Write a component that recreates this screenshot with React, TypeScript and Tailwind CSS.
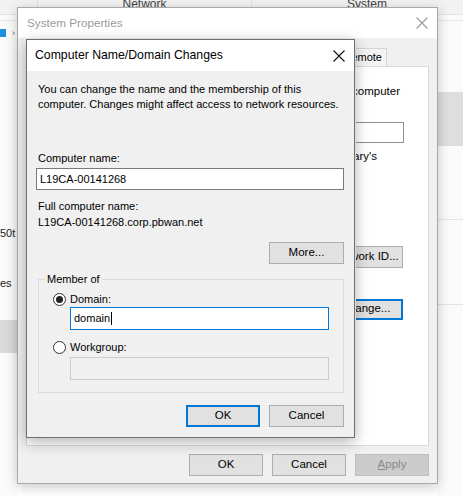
import React from "react";

const Btn = ({
  label,
  w = "w-[74px]",
  primary = false,
  disabled = false,
}: {
  label: React.ReactNode;
  w?: string;
  primary?: boolean;
  disabled?: boolean;
}) => (
  <div
    className={`${w} h-[22px] flex items-center justify-center text-[11.5px] ${
      disabled
        ? "bg-[#cccccc] border border-[#bfbfbf] text-[#8a8a8a]"
        : primary
        ? "bg-[#e1e1e1] border-2 border-[#0078d7]"
        : "bg-[#e1e1e1] border border-[#adadad]"
    }`}
  >
    {label}
  </div>
);

const Radio = ({ checked }: { checked?: boolean }) => (
  <div className="w-[13px] h-[13px] rounded-full border border-[#333] bg-white flex items-center justify-center">
    {checked && <div className="w-[7px] h-[7px] rounded-full bg-[#222]" />}
  </div>
);

const CloseIcon = ({ color }: { color: string }) => (
  <svg width="12" height="12" viewBox="0 0 12 12">
    <path d="M0.5 0.5 L11.5 11.5 M11.5 0.5 L0.5 11.5" stroke={color} strokeWidth="1.1" fill="none" />
  </svg>
);

export default function App() {
  return (
    <div className="relative w-[463px] h-[496px] overflow-hidden bg-white text-[11px] text-black font-['Liberation_Sans',Arial,sans-serif]">
      {/* Settings window behind */}
      <div className="flex flex-col h-full">
        <div className="h-[15px] flex bg-[#f2f2f2] border-b border-[#e3e3e3] text-[12px] text-[#444] leading-none">
          <div className="w-[38px] border-r border-[#e0e0e0]" />
          <div className="w-[214px] border-r border-[#e0e0e0] flex justify-center">
            <span className="-mt-[2px]">Network</span>
          </div>
          <div className="flex-1 pl-[95px]">
            <span className="-mt-[2px] block">System</span>
          </div>
        </div>
        <div className="flex flex-1">
          <div className="w-[17px] flex flex-col bg-[#fbfbfb]">
            <div className="h-[6px] border-b border-[#e6e6e6]" />
            <div className="mt-[8px] flex items-center h-[8px]">
              <div className="w-[6px] h-[8px] bg-[#1e90e0]" />
              <span className="ml-[6px] text-[9px] text-[#666] leading-none">›</span>
            </div>
            <div className="mt-[189px] text-[11px] leading-[14px] text-[#222]">50t</div>
            <div className="mt-[36px] text-[11px] leading-[14px] text-[#222]">es</div>
            <div className="mt-[30px] h-[33px] bg-[#dadada]" />
          </div>
          <div className="flex-1" />
          <div className="w-[26px] flex flex-col bg-[#fbfbfb]">
            <div className="h-[6px] border-b border-[#e6e6e6]" />
            <div className="mt-[71px] h-[54px] bg-[#dedede]" />
            <div className="mt-[73px] border-b border-[#e3e3e3]" />
            <div className="mt-[84px] border-b border-[#e3e3e3]" />
          </div>
        </div>
      </div>

      {/* System Properties */}
      <div className="absolute left-[17px] top-[7px] w-[421px] h-[477px] border border-[#a8a8a8] bg-[#f0f0f0] shadow-[0_3px_12px_rgba(0,0,0,0.22)] flex flex-col">
        <div className="h-[30px] bg-white flex items-center justify-between pl-[9px] pr-[9px]">
          <span className="text-[11.7px] text-[#9a9a9a]">System Properties</span>
          <CloseIcon color="#9a9a9a" />
        </div>
        <div className="flex flex-col px-[8px] pt-[10px]">
          <div className="flex justify-end pr-[42px]">
            <div className="w-[31px] overflow-hidden flex justify-end">
              <div className="h-[18px] pl-[3px] pr-[4px] flex items-center bg-[#f4f4f4] border border-b-0 border-[#d5d5d5] text-[11px] whitespace-nowrap">
                Remote
              </div>
            </div>
          </div>
          <div className="h-[380px] bg-white border border-[#d9d9d9] flex justify-end">
            <div className="w-[72px] overflow-hidden flex flex-col items-end text-[11.5px]">
              <div className="mt-[16px] mr-[28px] whitespace-nowrap">your computer</div>
              <div className="mt-[22px] mr-[24px] w-[120px] h-[21px] shrink-0 border border-[#8f8f8f] bg-white" />
              <div className="mt-[5px] mr-[51px] whitespace-nowrap">or "Mary's</div>
              <div className="mt-[80px] mr-[25px] w-[75px] h-[22px] shrink-0 bg-[#e1e1e1] border border-[#adadad] flex items-center justify-center whitespace-nowrap">
                Network ID...
              </div>
              <div className="mt-[31px] mr-[25px] w-[75px] h-[21px] shrink-0 bg-[#e1e1e1] border-2 border-[#0078d7] flex items-center justify-center whitespace-nowrap">
                Change...
              </div>
            </div>
          </div>
          <div className="flex justify-end gap-[9px] mt-[8px]">
            <Btn label="OK" />
            <Btn label="Cancel" />
            <Btn label={<span><span className="underline">A</span>pply</span>} disabled />
          </div>
        </div>
      </div>

      {/* Computer Name/Domain Changes */}
      <div className="absolute left-[26px] top-[39px] w-[329px] h-[399px] border border-[#6f6f6f] bg-[#f0f0f0] shadow-[0_4px_14px_rgba(0,0,0,0.3)] flex flex-col">
        <div className="h-[31px] bg-white flex items-center justify-between pl-[8px] pr-[9px]">
          <span className="text-[12.25px]">Computer Name/Domain Changes</span>
          <CloseIcon color="#111" />
        </div>
        <div className="flex flex-col pl-[11px] pr-[10px] pt-[11px]">
          <p className="leading-[14.5px]">
            You can change the name and the membership of this
            <br />
            computer. Changes might affect access to network resources.
          </p>
          <div className="mt-[40px] leading-[14px]">Computer name:</div>
          <div className="mt-[3px] -ml-[2px] h-[22px] border border-[#7a7a7a] bg-white flex items-center pl-[3px]">
            L19CA-00141268
          </div>
          <div className="mt-[8px] leading-[16px]">
            Full computer name:
            <br />
            L19CA-00141268.corp.pbwan.net
          </div>
          <div className="mt-[12px] flex justify-end">
            <Btn label="More..." w="w-[75px]" />
          </div>
          <fieldset className="mt-[8px] border border-[#dcdcdc] pl-[14px] pr-[14px] pb-[12px]">
            <legend className="-ml-[8px] px-[2px] leading-[14px]">Member of</legend>
            <div className="mt-[6px] flex items-center gap-[4px] h-[14px]">
              <Radio checked />
              <span>Domain:</span>
            </div>
            <div className="mt-[1px] ml-[17px] h-[23px] border border-[#0078d7] bg-white flex items-center pl-[3px]">
              domain
              <span className="inline-block w-px h-[13px] bg-black ml-px" />
            </div>
            <div className="mt-[10px] flex items-center gap-[4px] h-[14px]">
              <Radio />
              <span>Workgroup:</span>
            </div>
            <div className="mt-[3px] ml-[17px] h-[23px] border border-[#cccccc] bg-[#f0f0f0]" />
          </fieldset>
          <div className="mt-[12px] flex justify-end gap-[9px]">
            <Btn label="OK" primary />
            <Btn label="Cancel" w="w-[75px]" />
          </div>
        </div>
      </div>
    </div>
  );
}
